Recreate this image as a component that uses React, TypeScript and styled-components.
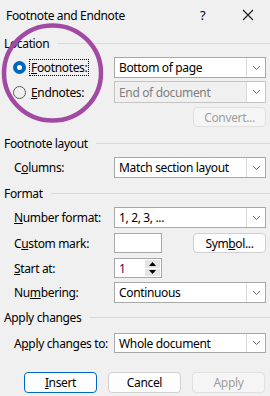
import React from "react";
import styled, { createGlobalStyle } from "styled-components";

const GlobalStyle = createGlobalStyle`
  body {
    margin: 0;
    background: #f0f0f0;
    font-family: "Noto Sans", "Open Sans", sans-serif;
    font-size: 12px;
    letter-spacing: -0.35px;
    color: #000;
  }
`;

const Dialog = styled.div`
  position: relative;
  width: 270px;
  height: 396px;
  overflow: hidden;
  background: #f0f0f0;
`;

const TitleBar = styled.div`
  height: 30px;
  display: flex;
  align-items: center;
  padding-left: 6px;
`;

const Title = styled.span`
  flex: 1;
  font-size: 12px;
`;

const Help = styled.span`
  width: 12px;
  margin-right: 30px;
  font-size: 13px;
`;

const Close = styled.svg`
  margin-right: 16px;
`;

const SectionHeader = styled.div<{ $top: number }>`
  display: flex;
  align-items: center;
  gap: 8px;
  height: 16px;
  margin-top: ${(p) => p.$top}px;
  padding-left: 4px;
  &::after {
    content: "";
    flex: 1;
    height: 1px;
    background: #d9d9d9;
  }
`;

const Row = styled.div<{ $top: number; $h: number }>`
  display: grid;
  grid-template-columns: 114px 1fr;
  align-items: stretch;
  height: ${(p) => p.$h}px;
  margin-top: ${(p) => p.$top}px;
  padding-right: 4px;
`;

const Label = styled.span`
  display: flex;
  align-items: center;
  padding-left: 14px;
`;

const RadioLabel = styled.label<{ $focus?: boolean }>`
  display: flex;
  align-items: center;
  padding-left: 13px;
  gap: 4px;
  span {
    padding: 0 1px;
    line-height: 15px;
    outline: ${(p) => (p.$focus ? "1px dotted #000" : "none")};
  }
`;

const Radio = styled.span<{ $checked?: boolean }>`
  box-sizing: border-box;
  width: 13px;
  height: 13px;
  border-radius: 50%;
  flex: none;
  outline: none !important;
  padding: 0 !important;
  background: ${(p) => (p.$checked ? "#fff" : "transparent")};
  border: ${(p) => (p.$checked ? "4px solid #0067c0" : "1px solid #5c5c5c")};
`;

const Select = styled.div<{ $disabled?: boolean }>`
  display: flex;
  box-sizing: border-box;
  height: 100%;
  border: 1px solid ${(p) => (p.$disabled ? "#c4c4c4" : "#a8a8a8")};
  background: ${(p) => (p.$disabled ? "#f0f0f0" : "#fff")};
  color: ${(p) => (p.$disabled ? "#7f7f7f" : "#000")};
`;

const SelectText = styled.span`
  flex: 1;
  display: flex;
  align-items: center;
  padding-left: 4px;
`;

const ArrowBox = styled.span`
  width: 18px;
  display: flex;
  align-items: center;
  justify-content: center;
  background: #fff;
  border-left: 1px solid #dadada;
`;

const TextBox = styled.div`
  box-sizing: border-box;
  width: 48px;
  height: 100%;
  border: 1px solid #a8a8a8;
  background: #fff;
  display: flex;
  align-items: center;
`;

const SpinValue = styled.span`
  flex: 1;
  padding-left: 4px;
  color: #3a0a52;
`;

const Spinner = styled.span`
  width: 16px;
  height: 100%;
  display: flex;
  flex-direction: column;
  gap: 1px;
  padding: 1px 1px 1px 0;
  box-sizing: border-box;
`;

const SpinBtn = styled.span`
  flex: 1;
  background: #e4e4e4;
  display: flex;
  align-items: center;
  justify-content: center;
`;

const Controls = styled.div`
  display: flex;
  justify-content: space-between;
  height: 100%;
`;

const Button = styled.button<{ $primary?: boolean; $disabled?: boolean }>`
  box-sizing: border-box;
  width: 73px;
  height: 100%;
  padding: 0;
  font: inherit;
  letter-spacing: inherit;
  border-radius: 4px;
  background: ${(p) => (p.$disabled ? "#f5f5f5" : "#fdfdfd")};
  color: ${(p) => (p.$disabled ? "#9d9d9d" : "#000")};
  border: 1px solid ${(p) => (p.$primary ? "#0067c0" : p.$disabled ? "#e0e0e0" : "#d0d0d0")};
`;

const ButtonRow = styled.div<{ $top: number }>`
  display: flex;
  justify-content: flex-end;
  gap: 11px;
  height: 21px;
  margin-top: ${(p) => p.$top}px;
  padding-right: 5px;
`;

const RightAligned = styled.div`
  display: flex;
  justify-content: flex-end;
`;

const Highlight = styled.svg`
  position: absolute;
  left: 0;
  top: 0;
  pointer-events: none;
`;

const Chevron = () => (
  <svg width="9" height="6" viewBox="0 0 9 6">
    <path d="M1 1 L4.5 4.5 L8 1" fill="none" stroke="#6a6a6a" strokeWidth="1" />
  </svg>
);

const DropDown: React.FC<{ value: string; disabled?: boolean }> = ({ value, disabled }) => (
  <Select $disabled={disabled}>
    <SelectText>{value}</SelectText>
    <ArrowBox>
      <Chevron />
    </ArrowBox>
  </Select>
);

const App: React.FC = () => {
  return (
    <Dialog>
      <GlobalStyle />
      <TitleBar>
        <Title>Footnote and Endnote</Title>
        <Help>?</Help>
        <Close width="12" height="12" viewBox="0 0 12 12">
          <path d="M1 1 L11 11 M11 1 L1 11" stroke="#1a1a1a" strokeWidth="1.1" />
        </Close>
      </TitleBar>

      <SectionHeader $top={5}>Location</SectionHeader>
      <Row $top={6} $h={21}>
        <RadioLabel $focus>
          <Radio $checked />
          <span><u>F</u>ootnotes:</span>
        </RadioLabel>
        <DropDown value="Bottom of page" />
      </Row>
      <Row $top={3} $h={22}>
        <RadioLabel>
          <Radio />
          <span><u>E</u>ndnotes:</span>
        </RadioLabel>
        <DropDown value="End of document" disabled />
      </Row>
      <Row $top={4} $h={20}>
        <span />
        <RightAligned>
          <Button $disabled>Convert...</Button>
        </RightAligned>
      </Row>

      <SectionHeader $top={8}>Footnote layout</SectionHeader>
      <Row $top={6} $h={21}>
        <Label>C<u>o</u>lumns:</Label>
        <DropDown value="Match section layout" />
      </Row>

      <SectionHeader $top={7}>Format</SectionHeader>
      <Row $top={6} $h={21}>
        <Label><u>N</u>umber format:</Label>
        <DropDown value="1, 2, 3, ..." />
      </Row>
      <Row $top={5} $h={20}>
        <Label>C<u>u</u>stom mark:</Label>
        <Controls>
          <TextBox />
          <Button>Sym<u>b</u>ol...</Button>
        </Controls>
      </Row>
      <Row $top={5} $h={20}>
        <Label><u>S</u>tart at:</Label>
        <Controls>
          <TextBox>
            <SpinValue>1</SpinValue>
            <Spinner>
              <SpinBtn>
                <svg width="7" height="4" viewBox="0 0 7 4"><path d="M0 4 L3.5 0 L7 4 Z" fill="#000" /></svg>
              </SpinBtn>
              <SpinBtn>
                <svg width="7" height="4" viewBox="0 0 7 4"><path d="M0 0 L3.5 4 L7 0 Z" fill="#000" /></svg>
              </SpinBtn>
            </Spinner>
          </TextBox>
        </Controls>
      </Row>
      <Row $top={4} $h={21}>
        <Label>Nu<u>m</u>bering:</Label>
        <DropDown value="Continuous" />
      </Row>

      <SectionHeader $top={6}>Apply changes</SectionHeader>
      <Row $top={8} $h={20}>
        <Label>A<u>p</u>ply changes to:</Label>
        <DropDown value="Whole document" />
      </Row>

      <ButtonRow $top={19}>
        <Button $primary><u>I</u>nsert</Button>
        <Button>Cancel</Button>
        <Button $disabled>Apply</Button>
      </ButtonRow>

      <Highlight width="270" height="396">
        <ellipse cx="52.5" cy="73" rx="48.5" ry="47.5" fill="none" stroke="#a249a4" strokeWidth="4.5" />
      </Highlight>
    </Dialog>
  );
};

export default App;
